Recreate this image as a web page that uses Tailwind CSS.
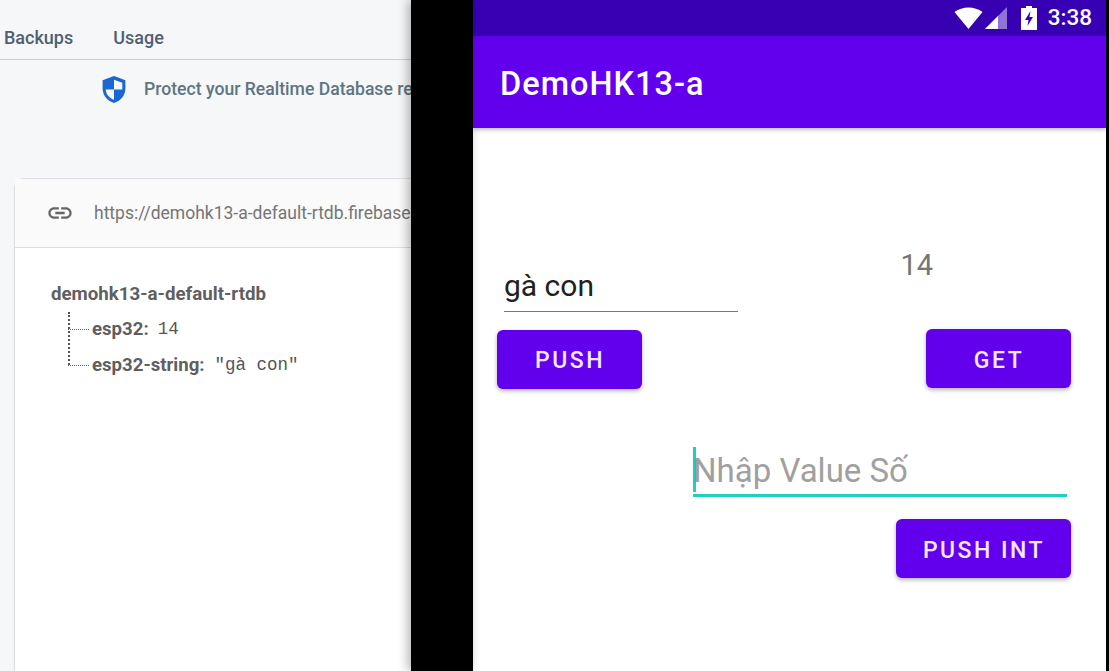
<!DOCTYPE html>
<html lang="en">
<head>
  <meta charset="utf-8" />
  <title>DemoHK13-a</title>
  <script src="https://cdn.jsdelivr.net/npm/@tailwindcss/browser@4"></script>
</head>
<body class="overflow-hidden bg-black font-['Roboto',sans-serif]">
  <div class="flex h-[671px] w-[1109px] overflow-hidden">

    <!-- Firebase console -->
    <div class="w-[411px] shrink-0 overflow-hidden bg-[#f6f7f9]">
      <div class="flex h-[60px] items-start gap-[40px] border-b border-[#c8d0da] pl-[4px] pt-[26px] text-[18px] leading-[24px] font-medium text-[#4f5f73] whitespace-nowrap">
        <span>Backups</span>
        <span>Usage</span>
      </div>
      <div class="flex h-[58px] items-center pl-[101px] whitespace-nowrap">
        <svg class="shrink-0" width="26" height="29" viewBox="0 0 24 28">
          <path d="M12 1 L23 5 V13 C23 20 18 25 12 27 C6 25 1 20 1 13 V5 Z" fill="#1a66d2" />
          <path d="M12 4.5 L20 7.5 V14 H12 Z M12 14 V24 C8 22.5 4.2 19 4 14 Z" fill="#f6f7f9" />
        </svg>
        <span class="ml-[17px] text-[17.6px] font-medium text-[#5f7482]">Protect your Realtime Database re</span>
      </div>
      <div class="ml-[14px] mt-[60px] h-[600px] rounded-tl-[10px] border border-r-0 border-[#dcdfe3] bg-white shadow-[0_1px_2px_rgba(0,0,0,0.06)]">
        <div class="flex h-[69px] items-center border-b border-[#dcdfe3] bg-[#fafafa] pl-[31px] whitespace-nowrap">
          <svg class="shrink-0" width="28" height="28" viewBox="0 0 24 24" fill="#666666">
            <path d="M3.9 12c0-1.71 1.39-3.1 3.1-3.1h4V7H7c-2.76 0-5 2.24-5 5s2.24 5 5 5h4v-1.9H7c-1.71 0-3.1-1.39-3.1-3.1zM8 13h8v-2H8v2zm9-6h-4v1.9h4c1.71 0 3.1 1.39 3.1 3.1s-1.39 3.1-3.1 3.1h-4V17h4c2.76 0 5-2.24 5-5s-2.24-5-5-5z" />
          </svg>
          <span class="ml-[20px] text-[17.5px] text-[#757575]">https://demohk13-a-default-rtdb.firebase</span>
        </div>
        <div class="pl-[36px] pt-[34px] text-[#5f5f5f] whitespace-nowrap">
          <div class="text-[18.7px] leading-[24px] font-bold">demohk13-a-default-rtdb</div>
          <div class="relative ml-[17px] mt-[6px]">
            <div class="absolute left-0 top-0 h-[53px] border-l-2 border-dotted border-[#555555]"></div>
            <div class="flex h-[35px] items-center">
              <span class="w-[21px] border-t border-dotted border-[#666666]"></span>
              <span class="ml-[3px] text-[18.6px] font-bold">esp32:</span>
              <span class="ml-[9px] font-['Liberation_Mono',monospace] text-[17.5px] text-[#555555]">14</span>
            </div>
            <div class="flex h-[36px] items-center pt-[1px]">
              <span class="w-[21px] border-t border-dotted border-[#666666]"></span>
              <span class="ml-[3px] text-[18.6px] font-bold">esp32-string:</span>
              <span class="ml-[10px] font-['Liberation_Mono',monospace] text-[17.5px] text-[#555555]">"gà con"</span>
            </div>
          </div>
        </div>
      </div>
    </div>

    <div class="relative w-[62px] shrink-0 bg-black shadow-[-3px_0_10px_rgba(0,0,0,0.3)]"></div>

    <!-- Android phone -->
    <div class="w-[633px] shrink-0 bg-white">
      <div class="flex h-[36px] items-center justify-end bg-[#3700b3] pr-[14px] text-white">
        <svg width="31" height="22" viewBox="0 0 30 22" fill="#ffffff"><path d="M1 5 C9 -1 21 -1 29 5 L15 22 Z" /></svg>
        <svg width="24" height="22" viewBox="0 0 24 22"><path d="M1 22 L23 0 V22 Z" fill="#8f74d6" /><path d="M1 22 L14 9 V22 Z" fill="#ffffff" /></svg>
        <svg class="ml-[13px]" width="16" height="24" viewBox="0 0 16 24">
          <path d="M5 0 H11 V2 H16 V24 H0 V2 H5 Z" fill="#ffffff" />
          <path d="M9.5 5 L4 14 H7.5 L6.5 20 L12 11 H8.5 Z" fill="#3700b3" />
        </svg>
        <span class="ml-[11px] text-[22.5px] font-medium">3:38</span>
      </div>
      <div class="flex h-[92px] items-center bg-[#6200ee] pl-[27px] pt-[4px] text-[32.5px] font-medium tracking-[1px] text-white shadow-[0_2px_4px_rgba(0,0,0,0.25)]">DemoHK13-a</div>

      <div class="flex items-start justify-between pl-[31px] pr-[173px] pt-[117px]">
        <div class="mt-[20px] h-[47px] w-[234px] border-b border-[#777777] pt-[3px] text-[30px] leading-[36px] text-[#212121]">gà con</div>
        <div class="text-[29px] leading-[40px] text-[#757575]">14</div>
      </div>

      <div class="mt-[18px] flex items-start justify-between pl-[24px] pr-[35px]">
        <button class="h-[59px] w-[145px] rounded-[6px] bg-[#6200ee] pt-[3px] pl-[1px] text-[23px] font-medium tracking-[2.5px] text-[#f3e8fd] shadow-[0_2px_4px_rgba(0,0,0,0.3)]">PUSH</button>
        <button class="-mt-[1px] h-[59px] w-[145px] rounded-[6px] bg-[#6200ee] pt-[5px] pl-[1px] text-[23px] font-medium tracking-[2.5px] text-[#f3e8fd] shadow-[0_2px_4px_rgba(0,0,0,0.3)]">GET</button>
      </div>

      <div class="ml-[220px] mt-[58px] flex h-[50px] w-[374px] items-center border-b-[3px] border-[#1fcfc0]">
        <span class="h-[45px] w-[3px] shrink-0 self-start bg-[#1fcfc0]"></span>
        <span class="-ml-[3px] text-[33px] text-[#a0a0a0]">Nhập Value Số</span>
      </div>

      <div class="mt-[22px] flex justify-end pr-[35px]">
        <button class="h-[59px] w-[175px] rounded-[6px] bg-[#6200ee] pt-[5px] pl-[1px] text-[23px] font-medium tracking-[2.5px] text-[#f3e8fd] shadow-[0_2px_4px_rgba(0,0,0,0.3)]">PUSH INT</button>
      </div>
    </div>

    <div class="flex-1 bg-black"></div>
  </div>
</body>
</html>
